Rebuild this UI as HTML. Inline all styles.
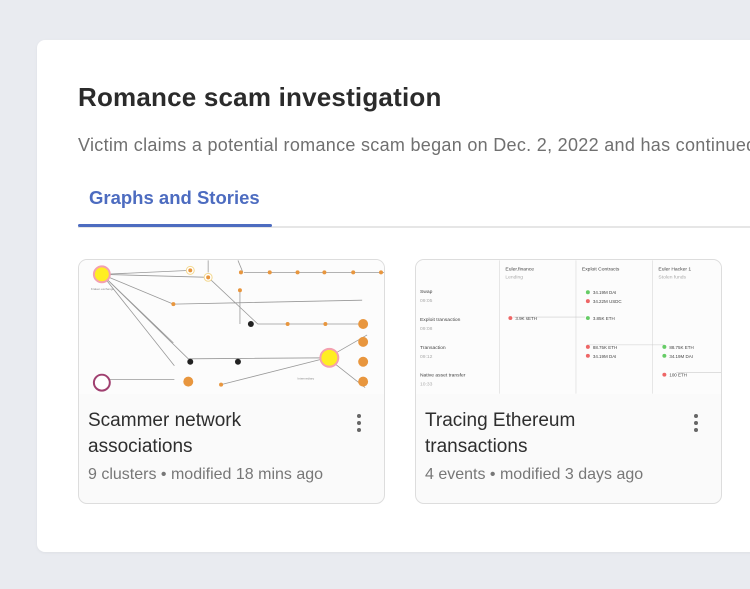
<!DOCTYPE html>
<html><head><style>
*{margin:0;padding:0;box-sizing:border-box}
body{width:750px;height:589px;background:#e9ebf0;font-family:"Liberation Sans",sans-serif;position:relative;overflow:hidden}
.panel{position:absolute;left:37px;top:40px;width:730px;height:512px;background:#fff;border-radius:8px;box-shadow:0 1px 3px rgba(0,0,0,.05)}
h1{position:absolute;left:78px;top:82px;font-size:26px;font-weight:bold;color:#2b2b2b;white-space:nowrap;letter-spacing:.2px}
.sub{position:absolute;left:78px;top:135px;font-size:18px;letter-spacing:.3px;color:#707070;white-space:nowrap}
.tab{position:absolute;left:89px;top:187px;font-size:18.5px;font-weight:bold;color:#4d6cc0}
.line{position:absolute;left:78px;top:226px;width:672px;height:2px;background:#e6e6e6}
.uline{position:absolute;left:78px;top:224px;width:194px;height:3px;background:#4d6cc0;border-radius:2px}
.card{position:absolute;top:259px;width:307px;height:245px;background:#fafafa;border:1px solid #ddd;border-radius:9px;overflow:hidden}
.img{position:absolute;left:0;top:0;width:100%;height:134px;background:#fcfcfc}
.t{position:absolute;left:9px;top:148px;font-size:19px;line-height:26px;color:#2e2e2e;width:250px}
.m{position:absolute;left:9px;top:206px;font-size:16px;color:#777;white-space:nowrap}
.dots{position:absolute;right:23px;top:154px;width:4px}
.dots i{display:block;width:4px;height:4px;border-radius:50%;background:#666;margin-bottom:3px}
svg text{font-family:"Liberation Sans",sans-serif}
</style></head><body>
<div class="panel"></div>
<h1>Romance scam investigation</h1>
<div class="sub">Victim claims a potential romance scam began on Dec. 2, 2022 and has continued</div>
<div class="tab">Graphs and Stories</div>
<div class="line"></div><div class="uline"></div>

<div class="card" style="left:78px">
<svg class="img" width="307" height="134" viewBox="0 0 307 134">
<g stroke="#999" stroke-width=".8" fill="none">
<path d="M23 14 L112 10 M23 14 L130 17 M23 14 L110 99 M23 14 L95 83 M23 14 L95 44 M23 14 L96 106 M30 120 L96 120 M130 17 L180 64 L283 64 M162 64 L162 30 M95 44 L285 40 M110 99 L250 98 M250 98 L143 125 M250 98 L288 128 M250 98 L290 75 M130 0 L130 12 M160 0 L165 12 M166 12 L307 12"/>
</g>
<circle cx="23" cy="14" r="8" fill="#ffee22" stroke="#f4a0b0" stroke-width="2"/>
<circle cx="23" cy="123" r="8" fill="#fff" stroke="#a04070" stroke-width="2"/>
<circle cx="112" cy="10" r="4" fill="#fff" stroke="#f3d890"/>
<circle cx="130" cy="17" r="4" fill="#fff" stroke="#f3d890"/>
<circle cx="252" cy="98" r="9" fill="#ffee22" stroke="#f4a0b0" stroke-width="2"/>
<g fill="#e8963e">
<circle cx="112" cy="10" r="2"/><circle cx="130" cy="17" r="2"/><circle cx="163" cy="12" r="2"/><circle cx="192" cy="12" r="2"/><circle cx="220" cy="12" r="2"/><circle cx="247" cy="12" r="2"/><circle cx="276" cy="12" r="2"/><circle cx="304" cy="12" r="2"/>
<circle cx="162" cy="30" r="2"/><circle cx="210" cy="64" r="2"/><circle cx="248" cy="64" r="2"/><circle cx="95" cy="44" r="2"/><circle cx="143" cy="125" r="2"/>
<circle cx="286" cy="64" r="5"/><circle cx="286" cy="82" r="5"/><circle cx="286" cy="102" r="5"/><circle cx="286" cy="122" r="5"/><circle cx="110" cy="122" r="5"/>
</g>
<g fill="#222"><circle cx="173" cy="64" r="3"/><circle cx="112" cy="102" r="3"/><circle cx="160" cy="102" r="3"/></g>
<g font-size="3" fill="#888"><text x="12" y="30">Kraken exchange</text><text x="220" y="120">Intermediary</text></g>
</svg>
<div class="t">Scammer network associations</div>
<div class="m">9 clusters • modified 18 mins ago</div>
<div class="dots"><i></i><i></i><i></i></div>
</div>

<div class="card" style="left:415px">
<svg class="img" width="307" height="134" viewBox="0 0 307 134">
<g stroke="#e0e0e0" stroke-width=".8"><path d="M84 0 V134 M161 0 V134 M238 0 V134"/></g>
<g stroke="#ccc" stroke-width=".6"><path d="M98 57 H170 M172 85 H250 M262 113 H307"/></g>
<g font-size="5" fill="#444"><text x="90" y="10">Euler.finance</text><text x="167" y="10">Exploit Contracts</text><text x="244" y="10">Euler Hacker 1</text>
<text x="4" y="33">Swap</text><text x="4" y="61">Exploit transaction</text><text x="4" y="89">Transaction</text><text x="4" y="117">Native asset transfer</text></g>
<g font-size="5" fill="#aaa"><text x="90" y="18">Lending</text><text x="244" y="18">Stolen funds</text><text x="4" y="42">09:05</text><text x="4" y="70">09:08</text><text x="4" y="98">09:12</text><text x="4" y="126">10:33</text></g>
<g font-size="4.5" fill="#444"><text x="178" y="34">34.19M DAI</text><text x="178" y="43">34.22M USDC</text><text x="100" y="60">3.9K sETH</text><text x="178" y="60">3.85K ETH</text><text x="178" y="89">88.75K ETH</text><text x="178" y="98">34.19M DAI</text><text x="255" y="89">88.75K ETH</text><text x="255" y="98">34.19M DAI</text><text x="255" y="117">100 ETH</text></g>
<g fill="#6c6"><circle cx="173" cy="32" r="2"/><circle cx="173" cy="58" r="2"/><circle cx="250" cy="87" r="2"/><circle cx="250" cy="96" r="2"/></g>
<g fill="#e66"><circle cx="173" cy="41" r="2"/><circle cx="95" cy="58" r="2"/><circle cx="173" cy="87" r="2"/><circle cx="173" cy="96" r="2"/><circle cx="250" cy="115" r="2"/></g>
</svg>
<div class="t">Tracing Ethereum transactions</div>
<div class="m">4 events • modified 3 days ago</div>
<div class="dots"><i></i><i></i><i></i></div>
</div>
</body></html>
